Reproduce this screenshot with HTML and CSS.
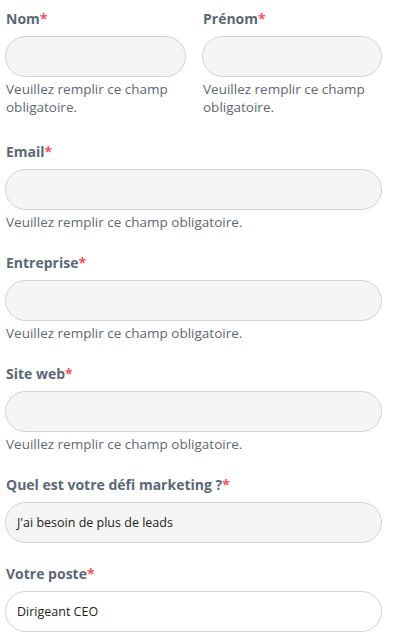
FILE: index.html
```html
<!DOCTYPE html>
<html lang="fr">
<head>
<meta charset="utf-8">
<link rel="stylesheet" href="styles.css">
</head>
<body>
<form class="form">
  <div class="row">
    <div class="field">
      <label class="label">Nom<span class="req">*</span></label>
      <div class="input"></div>
      <p class="help">Veuillez remplir ce champ obligatoire.</p>
    </div>
    <div class="field">
      <label class="label">Prénom<span class="req">*</span></label>
      <div class="input"></div>
      <p class="help">Veuillez remplir ce champ obligatoire.</p>
    </div>
  </div>
  <div class="field">
    <label class="label">Email<span class="req">*</span></label>
    <div class="input"></div>
    <p class="help">Veuillez remplir ce champ obligatoire.</p>
  </div>
  <div class="field">
    <label class="label">Entreprise<span class="req">*</span></label>
    <div class="input"></div>
    <p class="help">Veuillez remplir ce champ obligatoire.</p>
  </div>
  <div class="field">
    <label class="label">Site web<span class="req">*</span></label>
    <div class="input"></div>
    <p class="help">Veuillez remplir ce champ obligatoire.</p>
  </div>
  <div class="field select-field">
    <label class="label">Quel est votre défi marketing ?<span class="req">*</span></label>
    <div class="input select">J'ai besoin de plus de leads</div>
  </div>
  <div class="field select-field">
    <label class="label">Votre poste<span class="req">*</span></label>
    <div class="input select white">Dirigeant CEO</div>
  </div>
</form>
</body>
</html>
```

FILE: styles.css
```css
* { box-sizing: border-box; }
html, body { margin: 0; padding: 0; background: #fff; }
body {
  font-family: "Open Sans", "Liberation Sans", sans-serif;
  width: 394px;
  height: 640px;
  overflow: hidden;
}
.form {
  display: flex;
  flex-direction: column;
  padding: 9px 12px 0 5px;
}
.row {
  display: grid;
  grid-template-columns: 181px 180px;
  column-gap: 16px;
  margin-bottom: 3.5px;
}
.field {
  display: flex;
  flex-direction: column;
  margin-bottom: 22px;
}
.select-field { margin-bottom: 21px; }
.label {
  display: block;
  font-size: 14px;
  font-weight: 700;
  line-height: 19px;
  color: #5b6876;
  padding-left: 1px;
  margin-bottom: 8px;
}
.req { color: #f2545b; }
.input {
  height: 41px;
  border: 1px solid #d2d2d2;
  border-radius: 21px;
  background: #f5f5f5;
}
.select {
  display: flex;
  align-items: center;
  padding-left: 11px;
  font-size: 12.5px;
  color: #222;
}
.white { background: #fff; }
.help {
  margin: 3px 0 0 1px;
  font-size: 13.5px;
  line-height: 18px;
  color: #5f6873;
}
```
